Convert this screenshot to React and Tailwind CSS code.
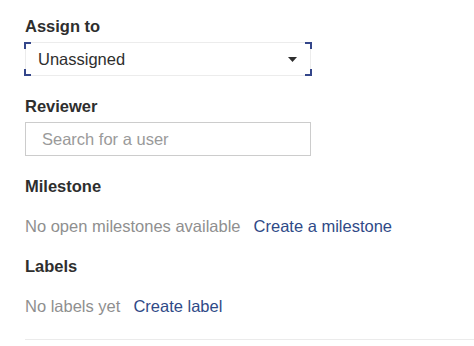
import React from 'react';

const Corner = ({ className }) => (
  <span className={`absolute w-[7px] h-[7px] border-[#34468a] ${className}`} />
);

const Section = ({ label, children }) => (
  <div className="h-[80px] pt-[16px] flex flex-col">
    <div className="h-[20px] leading-[20px] text-[16.5px] font-bold text-[#2e2e2e]">{label}</div>
    {children}
  </div>
);

const App = () => {
  return (
    <div className="w-[474px] h-[346px] bg-white pl-[25px] font-['Liberation_Sans',Arial,sans-serif] overflow-hidden">
      <Section label="Assign to">
        <div className="relative mt-[6px] w-[286px] h-[34px]">
          <div className="w-full h-full border border-[#ececec] flex items-center justify-between pl-[12px] pr-[13px]">
            <span className="text-[16.5px] text-[#2e2e2e]">Unassigned</span>
            <svg width="9" height="5" viewBox="0 0 9 5" className="mt-[1px]">
              <path d="M0 0 L9 0 L4.5 5 Z" fill="#2e2e2e" />
            </svg>
          </div>
          <Corner className="-left-[1px] top-0 border-l-2 border-t-2" />
          <Corner className="-right-[1px] top-0 border-r-2 border-t-2" />
          <Corner className="-left-[1px] bottom-0 border-l-2 border-b-2" />
          <Corner className="-right-[1px] bottom-0 border-r-2 border-b-2" />
        </div>
      </Section>

      <Section label="Reviewer">
        <div className="mt-[6px] w-[286px] h-[34px] border border-[#cccccc] flex items-center pl-[16px]">
          <span className="text-[16.5px] text-[#9a9a9a]">Search for a user</span>
        </div>
      </Section>

      <Section label="Milestone">
        <div className="mt-[20px] h-[20px] leading-[20px] text-[16.5px] flex">
          <span className="text-[#8f8f8f]">No open milestones available</span>
          <span className="ml-[13px] text-[#2f4a87]">Create a milestone</span>
        </div>
      </Section>

      <Section label="Labels">
        <div className="mt-[20px] h-[20px] leading-[20px] text-[16.5px] flex">
          <span className="text-[#8f8f8f]">No labels yet</span>
          <span className="ml-[13px] text-[#2f4a87]">Create label</span>
        </div>
      </Section>

      <div className="mt-[19px] h-px bg-[#ebebeb]" />
    </div>
  );
};

export default App;
